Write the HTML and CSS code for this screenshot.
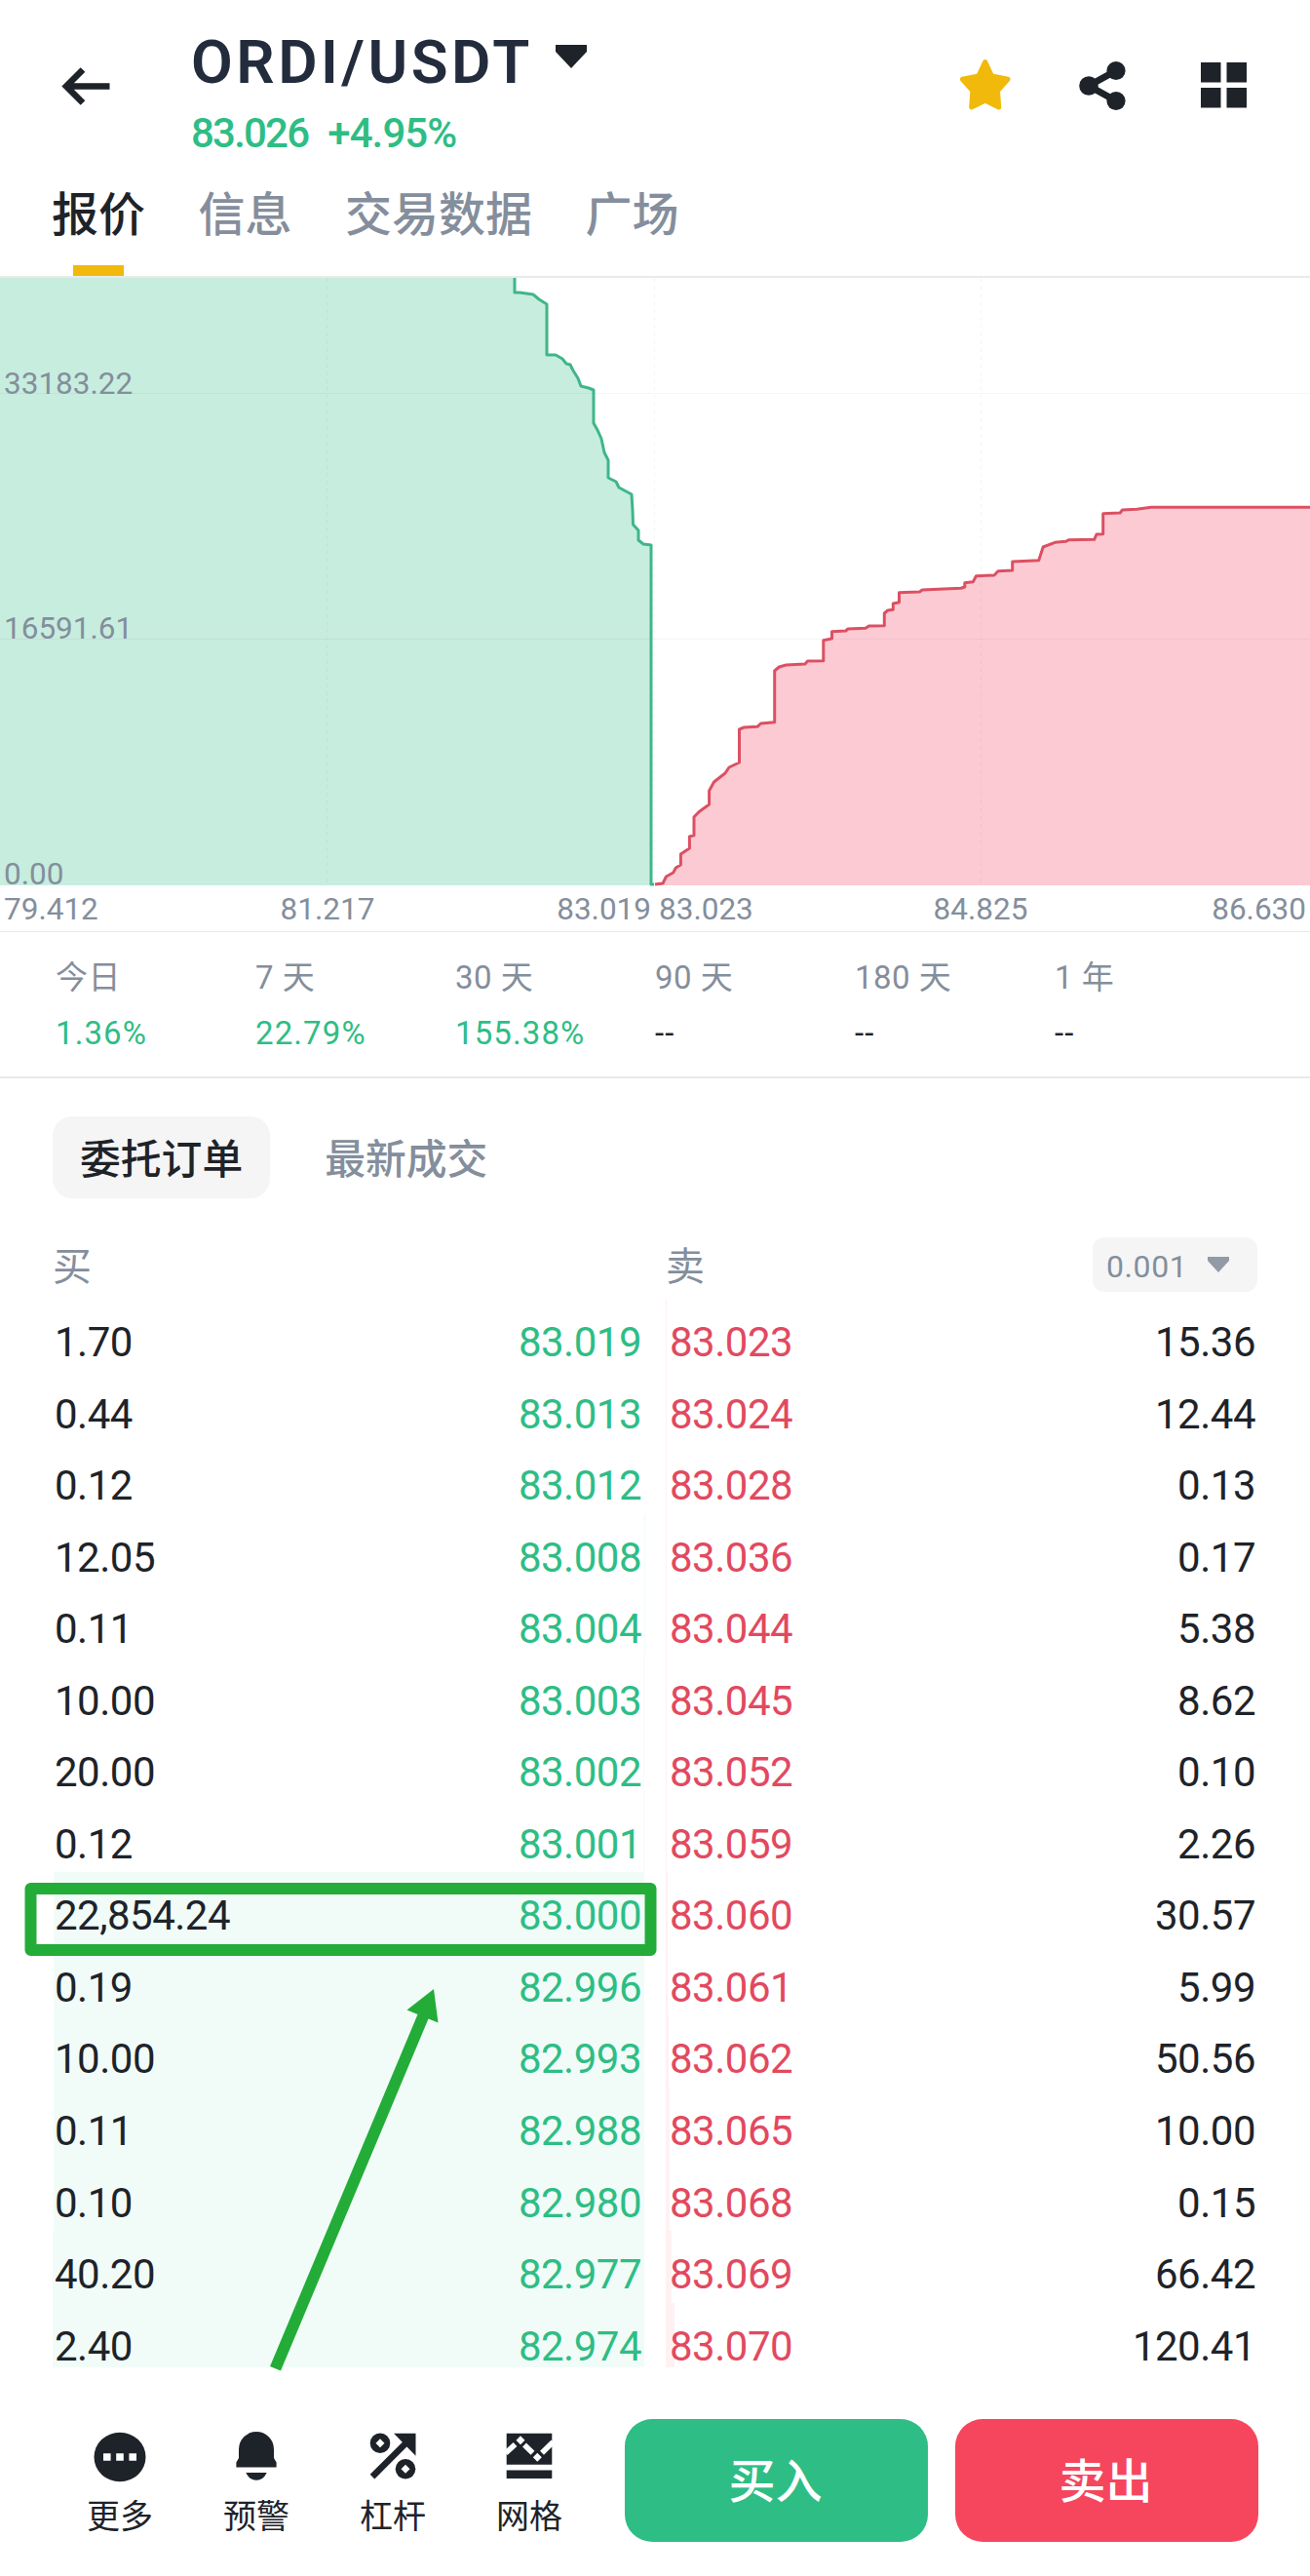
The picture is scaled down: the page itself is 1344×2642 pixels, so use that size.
FILE: index.html
```html
<!DOCTYPE html>
<html lang="zh-CN">
<head>
    <meta charset="UTF-8">
    <meta name="viewport" content="width=device-width, initial-scale=1.0">
    <title>ORDI/USDT</title>
    <link rel="stylesheet" href="styles.css">
</head>
<body>
    <div class="header">
        <svg class="icon-back" viewBox="0 0 52 42" width="52" height="42">
            <path d="M22 3.5 L5 20.5 L22 37.5 M5 20.5 H49.5" fill="none" stroke="#1e2329" stroke-width="6.6"/>
        </svg>
        <div class="pair">
            <div class="pair-name">
                <h1>ORDI/USDT</h1>
                <svg viewBox="0 0 32 24" width="32" height="24"><path d="M0 0 H32 V7 L16 24 L0 7 Z" fill="#1e2329"/></svg>
            </div>
            <div class="pair-price"><span>83.026</span><span class="change">+4.95%</span></div>
        </div>
        <div class="header-actions">
            <svg viewBox="0 0 54 54" width="54" height="54">
                <path d="M26.7 3.5 L33.500 18 L50 21.300 L39.500 33 L40.700 50 L26.700 43 L12.700 50 L13.900 33 L3.400 21.300 L19.900 18 Z" fill="#f0b90b" stroke="#f0b90b" stroke-width="5" stroke-linejoin="round"/>
            </svg>
            <svg viewBox="0 0 48 52" width="48" height="52" fill="#1e2329">
                <path d="M38 10.5 L10 26 L38 41.5" fill="none" stroke="#1e2329" stroke-width="7"/>
                <circle cx="38" cy="10.5" r="9.6"/>
                <circle cx="10" cy="26" r="9.8"/>
                <circle cx="38" cy="41.5" r="9.6"/>
            </svg>
            <svg viewBox="0 0 48 48" width="48" height="48" fill="#1e2329">
                <rect x="0" y="1" width="20.5" height="20.5"/>
                <rect x="26.5" y="1" width="20.5" height="20.5"/>
                <rect x="0" y="27" width="20.5" height="20.5"/>
                <rect x="26.5" y="27" width="20.5" height="20.5"/>
            </svg>
        </div>
    </div>

    <div class="tabs">
        <div class="tab active">报价</div>
        <div class="tab">信息</div>
        <div class="tab">交易数据</div>
        <div class="tab">广场</div>
    </div>

    <!-- Depth chart -->
    <svg class="depth-chart" viewBox="0 285 1344 670" width="1344" height="670">
        <path class="fill-buy" d="M0 285 H528 V300 L533 300 L547 302 L553 307 L561 312 V364 L570 364 L577 368 L581 373 L585 374 L588 380 L593 388 L596 396 L604 398 L609 400 V434 L613 441 L617 450 L620 464 L624 472 V490 L632 494 L635 500 L648 507 L649 523 L649.5 538 L655 544 V554 L660 558 L668 559 V908 H0 Z"/>
        <path class="fill-sell" d="M672 908 L680 906 L683.5 899 L690.7 895 L693.4 890 L698.4 887 V876 L707.4 870 V858 L712 856.7 V838 L717 832.7 L727.6 825 V811 L732.5 802 L744 793 L748 787 L758.5 782 V748 L763.5 746 L777 745.3 L780.5 742 L794.7 740.7 V688 L799.4 684 L806.6 682 L826 681 L828.6 678 L844.8 677.7 V656.7 L853.5 655 V647.7 L867.7 647 L870 645 L888 644.3 L891.5 642 L907.3 641.7 V629 L910.8 626 L916.3 625.3 V619 L922.5 617.7 V607.7 L943.5 607 L946.2 605 L985.8 603.3 L989.8 602 V597.7 L998.3 596.7 L1001.5 590.7 L1020 590 L1024 585.7 L1038.7 585 V576 L1065.7 574.7 L1070.2 561 L1082.3 556.3 L1093.5 555.3 L1096.7 553.7 L1122.7 553.3 L1125 548 L1131.7 547.7 V526.7 L1149.2 526 L1151.5 523 L1166.3 522.3 L1181 520.3 H1344 V908 Z"/>
        <g class="grid-lines">
            <path d="M0 403.5 H1344 M0 655.5 H1344"/>
            <path d="M335.5 285 V908 M671.5 285 V908 M1006.5 285 V908" stroke-dasharray="4 4"/>
        </g>
        <path class="line-buy" d="M528 285 V300 L533 300 L547 302 L553 307 L561 312 V364 L570 364 L577 368 L581 373 L585 374 L588 380 L593 388 L596 396 L604 398 L609 400 V434 L613 441 L617 450 L620 464 L624 472 V490 L632 494 L635 500 L648 507 L649 523 L649.5 538 L655 544 V554 L660 558 L668 559 V907 H671"/>
        <path class="line-sell" d="M672 907 L680 906 L683.5 899 L690.7 895 L693.4 890 L698.4 887 V876 L707.4 870 V858 L712 856.7 V838 L717 832.7 L727.6 825 V811 L732.5 802 L744 793 L748 787 L758.5 782 V748 L763.5 746 L777 745.3 L780.5 742 L794.7 740.7 V688 L799.4 684 L806.6 682 L826 681 L828.6 678 L844.8 677.7 V656.7 L853.5 655 V647.7 L867.7 647 L870 645 L888 644.3 L891.5 642 L907.3 641.7 V629 L910.8 626 L916.3 625.3 V619 L922.5 617.7 V607.7 L943.5 607 L946.2 605 L985.8 603.3 L989.8 602 V597.7 L998.3 596.7 L1001.5 590.7 L1020 590 L1024 585.7 L1038.7 585 V576 L1065.7 574.7 L1070.2 561 L1082.3 556.3 L1093.5 555.3 L1096.7 553.7 L1122.7 553.3 L1125 548 L1131.7 547.7 V526.7 L1149.2 526 L1151.5 523 L1166.3 522.3 L1181 520.3 H1344"/>
        <g class="axis">
            <text x="4" y="404">33183.22</text>
            <text x="4" y="655">16591.61</text>
            <text x="4" y="907">0.00</text>
            <text x="4" y="943">79.412</text>
            <text x="336" y="943" text-anchor="middle">81.217</text>
            <text x="668" y="943" text-anchor="end">83.019</text>
            <text x="676" y="943">83.023</text>
            <text x="1006" y="943" text-anchor="middle">84.825</text>
            <text x="1340" y="943" text-anchor="end">86.630</text>
        </g>
    </svg>

    <div class="stats">
        <div class="stat"><span>今日</span><b class="up">1.36%</b></div>
        <div class="stat"><span>7 天</span><b class="up">22.79%</b></div>
        <div class="stat"><span>30 天</span><b class="up">155.38%</b></div>
        <div class="stat"><span>90 天</span><b>--</b></div>
        <div class="stat"><span>180 天</span><b>--</b></div>
        <div class="stat"><span>1 年</span><b>--</b></div>
    </div>

    <div class="book-tabs">
        <div class="book-tab active">委托订单</div>
        <div class="book-tab">最新成交</div>
    </div>

    <div class="book-head">
        <div>买</div>
        <div class="sell-head">
            卖
            <div class="step">
                <span>0.001</span>
                <svg viewBox="0 0 22 16" width="22" height="16"><path d="M0 0 H22 V4 L11 16 L0 4 Z" fill="#929aa5"/></svg>
            </div>
        </div>
    </div>

    <div class="book">
        <div class="side buy" id="buy-side"></div>
        <div class="side sell" id="sell-side"></div>
        <svg class="mark" viewBox="0 0 660 510" width="660" height="510">
            <rect x="11.5" y="17" width="636" height="63" fill="none" stroke="#24ac38" stroke-width="12" stroke-linejoin="round"/>
            <path d="M425 120 L397.5 141.5 L408.5 146 L257 507 L268 511.5 L419.5 150.5 L429.5 154.5 Z" fill="#24ac38"/>
        </svg>
    </div>

    <div class="footer">
        <div class="menu">
            <div class="menu-item">
                <svg viewBox="0 0 54 54" width="54" height="54">
                    <ellipse cx="27" cy="27" rx="26.5" ry="25.3" fill="#1e2329"/>
                    <path d="M10 23.3 h7.6 v7.4 h-7.6 Z M23.2 23.3 h7.6 v7.4 h-7.6 Z M36.4 23.3 h7.6 v7.4 h-7.6 Z" fill="#fff"/>
                </svg>
                更多
            </div>
            <div class="menu-item">
                <svg viewBox="0 0 54 54" width="54" height="54" fill="#1e2329">
                    <path d="M9 19 a18 18 0 0 1 36 0 V28 L47.6 32.5 V37.5 H6.4 V32.5 L9 28 Z"/>
                    <path d="M16.3 43 H37.7 Q34 50.8 27 50.8 Q20 50.8 16.3 43 Z"/>
                </svg>
                预警
            </div>
            <div class="menu-item">
                <svg viewBox="0 0 54 54" width="54" height="54" fill="#1e2329">
                    <path d="M6 47.2 L40.7 12.5" stroke="#1e2329" stroke-width="6.6"/>
                    <path d="M28 2.7 H50.5 V25.7 Z"/>
                    <circle cx="14" cy="12.7" r="10.3"/>
                    <circle cx="40" cy="39.2" r="10.3"/>
                    <path d="M14 8.2 L18.5 12.7 L14 17.2 L9.5 12.7 Z M40 34.7 L44.5 39.2 L40 43.7 L35.5 39.2 Z" fill="#fff"/>
                </svg>
                杠杆
            </div>
            <div class="menu-item">
                <svg viewBox="0 0 54 54" width="54" height="54">
                    <path d="M3.7 2.7 H50.3 V34.7 H3.7 Z M3.7 40.5 H50.3 V49 H3.7 Z" fill="#1e2329"/>
                    <path d="M2.7 23 L12.500 14 M22 14.500 L30.500 22.800 M40 22.800 L51.500 11.500" fill="none" stroke="#fff" stroke-width="5.600"/>
                    <path d="M18 5.200 L22.500 9.700 L18 14.200 L13.500 9.700 Z M35.300 22.800 L39.800 27.300 L35.300 31.800 L30.800 27.300 Z" fill="#fff"/>
                </svg>
                网格
            </div>
        </div>
        <button class="btn btn-buy">买入</button>
        <button class="btn btn-sell">卖出</button>
    </div>

    <script>
        const bids = [
            ['1.70', '83.019'], ['0.44', '83.013'], ['0.12', '83.012'], ['12.05', '83.008'], ['0.11', '83.004'],
            ['10.00', '83.003'], ['20.00', '83.002'], ['0.12', '83.001'], ['22,854.24', '83.000'], ['0.19', '82.996'],
            ['10.00', '82.993'], ['0.11', '82.988'], ['0.10', '82.980'], ['40.20', '82.977'], ['2.40', '82.974']
        ];
        const asks = [
            ['15.36', '83.023'], ['12.44', '83.024'], ['0.13', '83.028'], ['0.17', '83.036'], ['5.38', '83.044'],
            ['8.62', '83.045'], ['0.10', '83.052'], ['2.26', '83.059'], ['30.57', '83.060'], ['5.99', '83.061'],
            ['50.56', '83.062'], ['10.00', '83.065'], ['0.15', '83.068'], ['66.42', '83.069'], ['120.41', '83.070']
        ];

        const toNumber = (s) => parseFloat(s.replace(',', ''));
        const maxTotal = bids.reduce((sum, row) => sum + toNumber(row[0]), 0);

        // Each row is backed by a bar for the cumulative amount
        function renderSide(id, rows) {
            const side = document.getElementById(id);
            let total = 0;
            rows.forEach(([amount, price]) => {
                total += toNumber(amount);
                const row = document.createElement('div');
                row.className = 'row';
                row.innerHTML = `
                    <div class="bar" style="width: ${(total / maxTotal * 100).toFixed(2)}%"></div>
                    <span class="amount">${amount}</span>
                    <span class="price">${price}</span>
                `;
                side.appendChild(row);
            });
        }

        renderSide('buy-side', bids);
        renderSide('sell-side', asks);
    </script>
</body>
</html>
```
FILE: styles.css
```css
* { box-sizing: border-box; }
body { font-family: Roboto, "Noto Sans CJK SC", sans-serif; margin: 0; background-color: #fff; color: #1e2329; width: 1344px; height: 2642px; overflow: hidden; }
.header { display: flex; height: 180px; padding: 0 64px 0 63px; }
.icon-back { margin-top: 68px; }
.pair { margin-left: 81px; flex: 1; }
.pair-name { display: flex; align-items: flex-start; gap: 23px; }
.pair-name svg { margin-top: 46px; }
h1 { margin: 28px 0 0; font-size: 62px; line-height: 72px; font-weight: 600; letter-spacing: 3.5px; color: #232c3d; }
.pair-price { display: flex; gap: 20px; margin-top: 13px; font-size: 42px; line-height: 48px; font-weight: 500; letter-spacing: -1.8px; color: #2ebd85; }
.pair-price .change { letter-spacing: -0.9px; }
.header-actions { display: flex; margin-top: 60px; }
.header-actions svg:nth-child(2) { margin: 2px 77px 0 69px; }
.header-actions svg:nth-child(3) { margin-top: 3px; }
.tabs { display: flex; gap: 54.5px; height: 105px; padding: 0 53px; border-bottom: 2px solid #eaeaea; }
.tab { display: flex; flex-direction: column; align-items: center; padding-top: 1px; font-size: 48px; line-height: 80px; color: #848e9c; font-weight: 500; }
.tab.active { color: #1e2329; }
.tab.active::after { content: ""; width: 52px; height: 11px; margin-top: 11px; background: #f0b90b; }
.depth-chart { display: block; }
.fill-buy { fill: #c7eddf; }
.fill-sell { fill: #fccad2; }
.line-buy, .line-sell { fill: none; stroke-width: 3; stroke-linejoin: round; }
.line-buy { stroke: #3fb68a; }
.line-sell { stroke: #dc5063; }
.grid-lines path { fill: none; stroke: rgba(0, 0, 0, 0.04); }
.axis text { font-size: 31.5px; fill: #848e9c; }
.stats { display: grid; grid-template-columns: repeat(6, 205px); height: 151px; padding: 25px 0 0 57px; border-top: 1px solid #e6e8ea; border-bottom: 2px solid #eaeaea; }
.stat { font-size: 33px; line-height: 44px; letter-spacing: 0.5px; }
.stat span { display: block; color: #848e9c; }
.stat b { display: block; margin-top: 13px; font-weight: 400; letter-spacing: 1.1px; }
.stat .up { color: #2ebd85; }
.book-tabs { display: flex; gap: 28px; padding: 39px 0 0 54px; }
.book-tab { height: 84px; padding: 0 28px; border-radius: 20px; font-size: 41.8px; line-height: 89px; font-weight: 500; color: #848e9c; }
.book-tab.active { background: #f5f5f5; color: #1e2329; }
.book-head { display: grid; grid-template-columns: 607px 607px; gap: 22px; height: 56px; margin: 40px 0 7px 54px; font-size: 40px; line-height: 62px; color: #848e9c; }
.sell-head { display: flex; justify-content: space-between; }
.step { display: flex; align-items: center; gap: 21px; width: 169px; height: 56px; padding-left: 14px; border-radius: 12px; background: #f5f5f5; font-size: 32px; letter-spacing: 0.6px; }
.step span { padding-top: 4px; }
.book { position: relative; display: grid; grid-template-columns: 607px 607px; gap: 22px; height: 1096px; margin-left: 54px; font-size: 42px; letter-spacing: -0.5px; }
.row { position: relative; display: flex; justify-content: space-between; height: 73.55px; padding: 15px 3px 0 2px; line-height: 60px; }
.sell .row { flex-direction: row-reverse; padding: 15px 2px 0 4px; }
.bar { position: absolute; top: 0; height: 100%; }
.row:last-child { height: 66px; }
.buy .bar { right: 0; background: #f1fcf8; }
.sell .bar { left: 0; background: #fff1f3; }
.amount, .price { position: relative; }
.buy .price { color: #2ebd85; }
.sell .price { color: #e2495f; }
.mark { position: absolute; left: -34px; top: 588px; overflow: visible; }
.footer { display: flex; margin: 53px 53px 0; }
.menu { display: flex; gap: 72px; width: 588px; padding-left: 36px; }
.menu-item { width: 68px; padding-top: 12px; font-size: 34px; line-height: 50px; text-align: center; }
.menu-item svg { display: block; margin: 0 auto 9px; }
.btn { width: 311px; height: 126px; margin-right: 28px; padding: 4px 2px 0 0; border: none; border-radius: 28px; color: #fff; font: 500 48px/122px Roboto, "Noto Sans CJK SC", sans-serif; }
.btn-buy { background: #2ebd85; }
.btn-sell { margin-right: 0; background: #f6465d; }
```
